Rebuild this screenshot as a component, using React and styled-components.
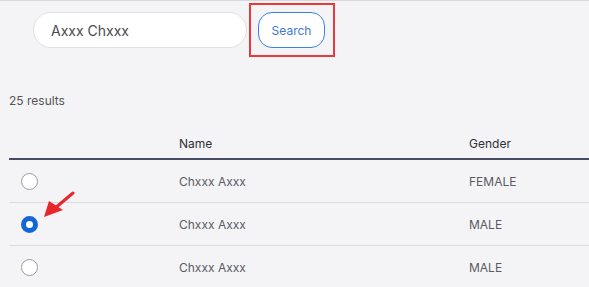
import React from 'react'
import styled, { createGlobalStyle } from 'styled-components'

const GlobalStyle = createGlobalStyle`
    body {
        margin: 0;
        background: #f4f4f7;
        font-family: 'Inter', 'Liberation Sans', sans-serif;
    }
`

const Page = styled.div`
    position: relative;
    height: 287px;
    overflow: hidden;
    border-top: 1px solid #d8d8dc;
    box-sizing: border-box;
    padding-left: 9px;
`

const SearchRow = styled.div`
    display: flex;
    align-items: center;
    padding-top: 2px;
    padding-left: 24px;
    gap: 2px;
`

const SearchInput = styled.div`
    width: 214px;
    height: 36px;
    box-sizing: border-box;
    border: 1px solid #e1e1e5;
    border-radius: 18px;
    background: #fff;
    display: flex;
    align-items: center;
    padding-left: 17px;
    font-size: 14px;
    color: #4a4a4e;
`

const Highlight = styled.div`
    border: 2px solid #e8393b;
    padding: 7px 8px 7px 7px;
    display: flex;
`

const SearchButton = styled.button`
    width: 67px;
    height: 36px;
    border: 1.5px solid #3a80e8;
    border-radius: 14px;
    background: #fff;
    color: #3f78d6;
    font-family: 'Inter', 'Liberation Sans', sans-serif;
    font-size: 12px;
    padding: 0;
`

const Results = styled.div`
    margin-top: 36px;
    font-size: 12px;
    color: #555;
    line-height: 15px;
`

const Table = styled.div`
    margin-top: 20px;
`

const Row = styled.div`
    display: grid;
    grid-template-columns: 170px 290px 1fr;
    align-items: center;
    height: ${p => p.$head ? '30px' : '42px'};
    border-bottom: ${p => p.$head ? '2px solid #474b64' : p.$last ? 'none' : '1px solid #dcdce1'};
    font-size: 12px;
    color: ${p => p.$head ? '#2f2f33' : '#5a5a62'};
`

const Cell = styled.div`
    padding-left: ${p => p.$radio ? '12px' : '0'};
    display: flex;
    align-items: center;
`

const Radio = styled.span`
    width: 17px;
    height: 17px;
    box-sizing: border-box;
    border-radius: 50%;
    background: #fff;
    border: ${p => p.$checked ? '5.5px solid #1466d6' : '1.3px solid #9a9aa0'};
`

const Arrow = styled.svg`
    position: absolute;
    left: 40px;
    top: 188px;
`

const rows = [
    { name: 'Chxxx Axxx', gender: 'FEMALE', checked: false },
    { name: 'Chxxx Axxx', gender: 'MALE', checked: true },
    { name: 'Chxxx Axxx', gender: 'MALE', checked: false },
]

export default function App() {
    return (
        <Page>
            <GlobalStyle />
            <SearchRow>
                <SearchInput>Axxx Chxxx</SearchInput>
                <Highlight>
                    <SearchButton>Search</SearchButton>
                </Highlight>
            </SearchRow>

            <Results>25 results</Results>

            <Table>
                <Row $head>
                    <Cell $radio />
                    <Cell>Name</Cell>
                    <Cell>Gender</Cell>
                </Row>
                {rows.map((r, i) => (
                    <Row key={i} $last={i === rows.length - 1}>
                        <Cell $radio><Radio $checked={r.checked} /></Cell>
                        <Cell>{r.name}</Cell>
                        <Cell>{r.gender}</Cell>
                    </Row>
                ))}
            </Table>

            <Arrow width="38" height="32" viewBox="0 0 38 32">
                <line x1="33" y1="4" x2="14" y2="20" stroke="#e8262b" strokeWidth="3" strokeLinecap="round" />
                <polygon points="4,28 9,12 23,21" fill="#e8262b" />
            </Arrow>
        </Page>
    )
}
